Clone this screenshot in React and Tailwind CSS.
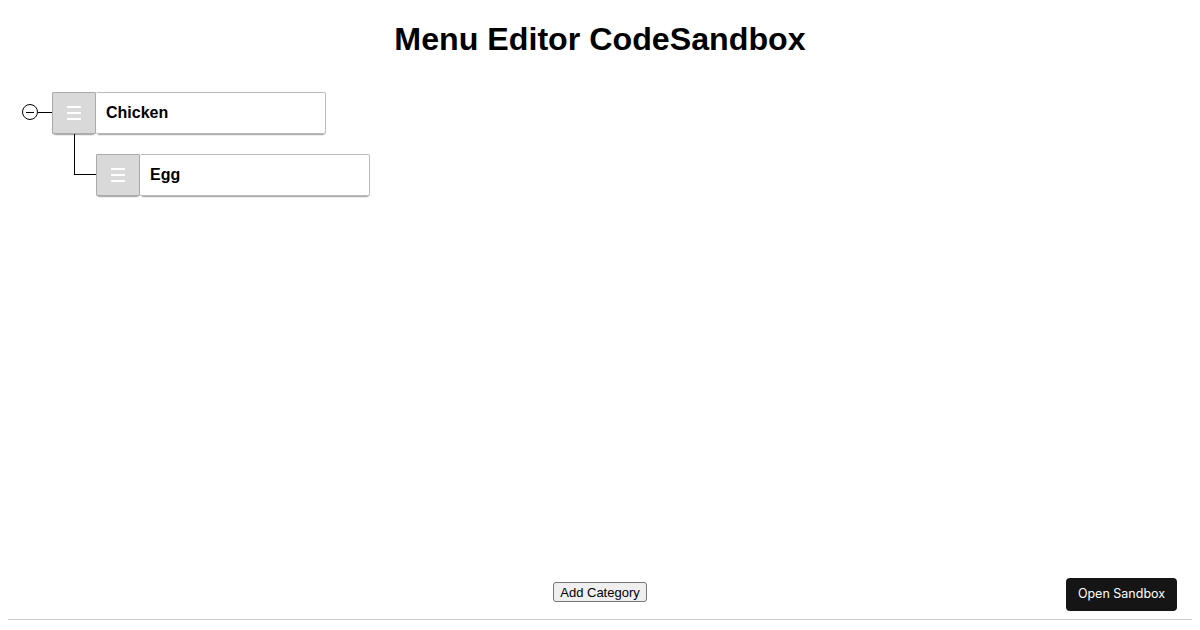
import React from "react";

const HandleBars = () => (
  <div className="flex flex-col gap-[4px]">
    <span className="block w-[14px] h-[2px] bg-white" />
    <span className="block w-[14px] h-[2px] bg-white" />
    <span className="block w-[14px] h-[2px] bg-white" />
  </div>
);

const TreeRow = ({ title, depth, hasChildren, isChild }) => {
  const pad = depth === 0 ? "pl-[44px]" : "pl-[88px]";
  return (
    <div className={`relative h-[62px] py-[10px] flex ${pad}`}>
      {hasChildren && (
        <>
          {/* collapse button */}
          <div className="absolute left-[14px] top-[22px] w-[16px] h-[16px] rounded-full border border-black bg-white flex items-center justify-center z-10">
            <span className="block w-[8px] h-px bg-black" />
          </div>
          <div className="absolute left-[30px] top-[30px] w-[14px] h-px bg-black" />
          {/* line down to children */}
          <div className="absolute left-[66px] top-[52px] w-px h-[10px] bg-black" />
        </>
      )}
      {isChild && (
        <>
          <div className="absolute left-[66px] top-0 w-px h-[31px] bg-black" />
          <div className="absolute left-[66px] top-[30px] w-[22px] h-px bg-black" />
        </>
      )}
      <div className="relative z-10 w-[44px] h-full bg-[#d9d9d9] border border-[#aaa] rounded-[1px] shadow-[0_2px_2px_-2px_#000] flex items-center justify-center">
        <HandleBars />
      </div>
      <div className="w-[230px] h-full bg-white border border-[#bbb] border-l-0 rounded-[2px] shadow-[0_2px_2px_-2px_#000] pl-[10px] pr-[5px] flex items-center">
        <span className="font-bold text-[16px]">{title}</span>
      </div>
    </div>
  );
};

export default function App() {
  return (
    <div className="relative h-[630px] flex flex-col px-2 bg-white text-black font-['Liberation_Sans',Arial,sans-serif]">
      <h1 className="mt-[21px] mb-[24px] text-center text-[32.2px] leading-[37px] font-bold">
        Menu Editor CodeSandbox
      </h1>

      <div className="flex-1">
        <TreeRow title="Chicken" depth={0} hasChildren />
        <TreeRow title="Egg" depth={1} isChild />
      </div>

      <div className="flex justify-center">
        <button className="h-[20px] px-[6px] text-[13px] leading-none bg-[#efefef] border border-[#767676] rounded-[3px]">
          Add Category
        </button>
      </div>
      <div className="mt-[17px] mb-[10px] h-px bg-[#cccccc]" />

      <button className="absolute right-[23px] bottom-[19px] w-[111px] h-[33px] rounded-[4px] bg-[#151515] text-white text-[12.5px] font-['Inter',sans-serif]">
        Open Sandbox
      </button>
    </div>
  );
}
